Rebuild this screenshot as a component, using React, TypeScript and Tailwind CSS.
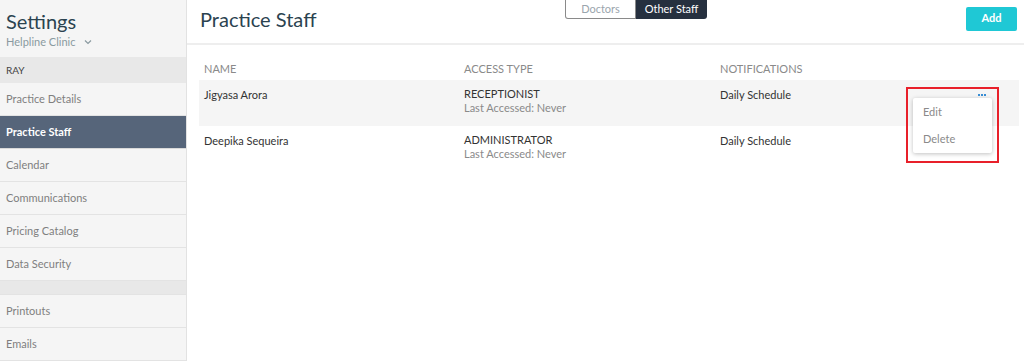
import React from "react";

const font = { fontFamily: "Lato, 'Open Sans', 'Liberation Sans', sans-serif" };

function SideItem({ label, active }: { label: string; active?: boolean }) {
  return (
    <div
      className={
        active
          ? "h-[33px] flex items-center px-[6px] bg-[#56657a] text-white font-bold text-[11px] border-b border-[#d9d9d9]"
          : "h-[33px] flex items-center px-[6px] text-[#7f7f7f] text-[11px] border-b border-[#e3e3e3]"
      }
    >
      {label}
    </div>
  );
}

export default function App() {
  return (
    <div className="w-[1024px] h-[361px] flex bg-white overflow-hidden" style={font}>
      <aside className="w-[187px] shrink-0 bg-[#f5f5f5] border-r border-[#e2e2e2] flex flex-col">
        <div className="h-[57px] px-[6px] pt-[9px]">
          <div className="text-[20px] leading-[24px] text-[#2b4350]">Settings</div>
          <div className="flex items-center gap-[6px] text-[11px] leading-[15px] text-[#8a9aa0] mt-[1px]">
            <span>Helpline Clinic</span>
            <svg width="8" height="6" viewBox="0 0 8 6" className="ml-[3px]">
              <path d="M1 1.5 L4 4.5 L7 1.5" fill="none" stroke="#8a9aa0" strokeWidth="1.2" />
            </svg>
          </div>
        </div>
        <div className="h-[26px] bg-[#e8e8e8] flex items-center px-[6px] text-[10px] text-[#444]">RAY</div>
        <SideItem label="Practice Details" />
        <SideItem label="Practice Staff" active />
        <SideItem label="Calendar" />
        <SideItem label="Communications" />
        <SideItem label="Pricing Catalog" />
        <SideItem label="Data Security" />
        <div className="h-[14px] bg-[#e8e8e8] border-b border-[#e3e3e3]" />
        <SideItem label="Printouts" />
        <SideItem label="Emails" />
      </aside>

      <main className="flex-1 flex flex-col">
        <div className="relative h-[45px] border-b-2 border-[#eeeeee] flex items-center justify-between pl-[13px] pr-[7px]">
          <div className="text-[20px] leading-[24px] text-[#2b4350] -mt-[5px]">Practice Staff</div>
          <div className="absolute left-[378px] top-0 flex h-[19px] text-[11px]">
            <div className="w-[71px] flex items-center justify-center border border-t-0 border-[#8a8a8a] rounded-bl-[3px] text-[#9aa5ad] bg-white">
              Doctors
            </div>
            <div className="w-[71px] flex items-center justify-center bg-[#26303f] text-white rounded-br-[3px]">
              Other Staff
            </div>
          </div>
          <button className="w-[51px] h-[24px] bg-[#1fc8d5] rounded-[2px] text-white text-[11px] font-bold -mt-[6px]">
            Add
          </button>
        </div>

        <div className="pl-[12px] pr-[5px] pt-[14px]">
          <div className="flex h-[21px] items-center text-[11px] text-[#8a8a8a] px-[5px]">
            <div className="w-[260px]">NAME</div>
            <div className="w-[256px]">ACCESS TYPE</div>
            <div className="flex-1">NOTIFICATIONS</div>
          </div>
          <div className="relative flex h-[46px] bg-[#f5f5f5] pt-[7px] px-[5px] text-[11px] text-[#333]">
            <div className="w-[260px]">Jigyasa Arora</div>
            <div className="w-[256px] leading-[14px]">
              <div className="text-[#333]">RECEPTIONIST</div>
              <div className="text-[#8a8a8a]">Last Accessed: Never</div>
            </div>
            <div className="flex-1">Daily Schedule</div>
            <div className="absolute left-[707px] top-[7px] w-[93px] h-[76px] border-2 border-[#e8202a] z-10">
              <div className="absolute right-[11px] top-[5px] flex gap-[1px]">
                <span className="w-[2px] h-[2px] bg-[#3a8fd6]" />
                <span className="w-[2px] h-[2px] bg-[#3a8fd6]" />
                <span className="w-[2px] h-[2px] bg-[#3a8fd6]" />
              </div>
              <div className="absolute left-[5px] top-[9px] w-[79px] h-[55px] bg-white shadow-[0_1px_4px_rgba(0,0,0,0.25)] rounded-[2px] text-[11px] text-[#8a8a8a] flex flex-col pt-[1px]">
                <div className="h-[27px] flex items-center px-[10px]">Edit</div>
                <div className="h-[27px] flex items-center px-[10px]">Delete</div>
              </div>
            </div>
          </div>
          <div className="flex h-[46px] pt-[7px] px-[5px] text-[11px] text-[#333]">
            <div className="w-[260px]">Deepika Sequeira</div>
            <div className="w-[256px] leading-[14px]">
              <div>ADMINISTRATOR</div>
              <div className="text-[#8a8a8a]">Last Accessed: Never</div>
            </div>
            <div className="flex-1">Daily Schedule</div>
          </div>
        </div>
      </main>
    </div>
  );
}
